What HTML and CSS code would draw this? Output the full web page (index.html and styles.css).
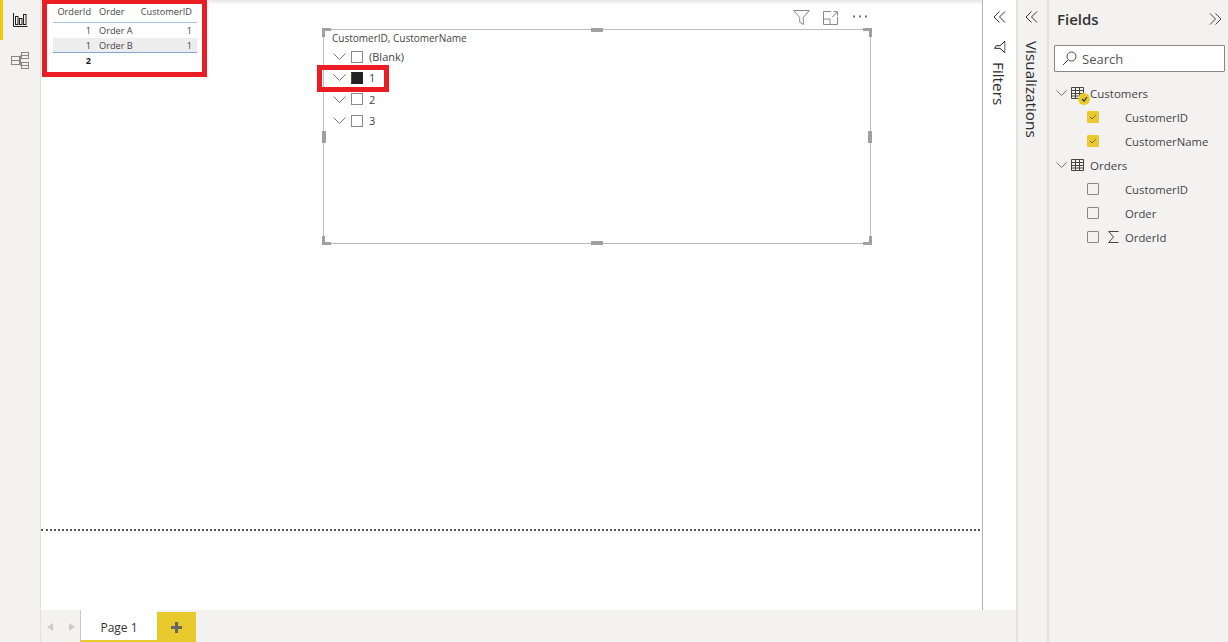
FILE: index.html
```html
<!DOCTYPE html>
<html lang="en">
<head>
<meta charset="utf-8">
<title>Report</title>
<link rel="stylesheet" href="styles.css">
</head>
<body>
<div class="app">
  <nav class="rail">
    <div class="rail-btn active">
      <svg width="16" height="14" viewBox="0 0 16 14" fill="none" stroke="#222" stroke-width="1"><path d="M1.5 0v13.5h14"/><rect x="3.5" y="3.5" width="2.5" height="8"/><rect x="7.5" y="5.5" width="2.5" height="6"/><rect x="11.500" y="1.500" width="2.500" height="10"/></svg>
    </div>
    <div class="rail-btn">
      <svg width="18" height="17" viewBox="0 0 18 17" fill="none" stroke="#888" stroke-width="1"><rect x=".5" y="4.500" width="8" height="8"/><path d="M.5 8.500h8"/><rect x="10.500" y=".5" width="7" height="6"/><path d="M10.500 3.500h7"/><rect x="10.500" y="10.500" width="7" height="6"/><path d="M10.500 13.500h7M9.500 3.500v10M8.500 8.500h1M9.500 3.500h1M9.500 13.500h1"/></svg>
    </div>
  </nav>
  <main class="main">
    <section class="canvas">
      <div class="topshade"></div>
      <div class="table-visual">
        <div class="tv-row tv-head"><span class="c1">OrderId</span><span class="c2">Order</span><span class="c3">CustomerID</span></div>
        <div class="tv-row tv-body"><span class="c1">1</span><span class="c2">Order A</span><span class="c3">1</span></div>
        <div class="tv-row tv-body tv-alt"><span class="c1">1</span><span class="c2">Order B</span><span class="c3">1</span></div>
        <div class="tv-row tv-total"><span class="c1">2</span></div>
      </div>
      <div class="visual-tools">
        <svg width="17" height="15" viewBox="0 0 17 15" fill="none" stroke="#888"><path d="M.7 .5h15.600l-6 7v7l-3.600-2.400V7.500z"/></svg>
        <svg width="15" height="14" viewBox="0 0 15 14" fill="none" stroke="#888"><path d="M8 .5H.5v13h14V6M.5 8h6.500v5.500M9 6.500l5-5.500M10.500 .7h4v4"/></svg>
        <svg class="dots" width="15" height="3" viewBox="0 0 15 3" fill="#777"><rect width="2" height="2" y=".5"/><rect x="6" width="2" height="2" y=".5"/><rect x="12" width="2" height="2" y=".5"/></svg>
      </div>
      <div class="slicer">
        <i class="h tl"></i><i class="h tr"></i><i class="h bl"></i><i class="h br"></i>
        <i class="m mt"></i><i class="m mb"></i><i class="m ml"></i><i class="m mr"></i>
        <div class="slicer-title">CustomerID, CustomerName</div>
        <div class="slicer-row"><svg class="chev" width="13" height="7" viewBox="0 0 13 7" fill="none" stroke="#777"><path d="M.5 .5l6 6 6-6"/></svg><span class="box"></span><span>(Blank)</span></div>
        <div class="slicer-row"><svg class="chev" width="13" height="7" viewBox="0 0 13 7" fill="none" stroke="#777"><path d="M.5 .5l6 6 6-6"/></svg><span class="box on"></span><span>1</span></div>
        <div class="slicer-row"><svg class="chev" width="13" height="7" viewBox="0 0 13 7" fill="none" stroke="#777"><path d="M.5 .5l6 6 6-6"/></svg><span class="box"></span><span>2</span></div>
        <div class="slicer-row"><svg class="chev" width="13" height="7" viewBox="0 0 13 7" fill="none" stroke="#777"><path d="M.5 .5l6 6 6-6"/></svg><span class="box"></span><span>3</span></div>
      </div>
      <div class="mark mark-table"></div>
      <div class="mark mark-row"></div>
      <div class="page-break"></div>
    </section>
    <footer class="tabs">
      <div class="tab-nav">
        <svg width="6" height="8" viewBox="0 0 6 8" fill="#ccc"><path d="M6 0v8L0 4z"/></svg>
        <svg width="6" height="8" viewBox="0 0 6 8" fill="#ccc"><path d="M0 0v8l6-4z"/></svg>
      </div>
      <div class="tab">Page 1</div>
      <div class="tab-add"><svg width="11" height="11" viewBox="0 0 11 11" fill="#666"><path d="M4 0h3v4h4v3H7v4H4V7H0V4h4z"/></svg></div>
    </footer>
  </main>
  <aside class="pane filters">
    <svg class="collapse" width="13" height="12" viewBox="0 0 13 12" fill="none" stroke="#333"><path d="M6.500 .5L1 6l5.500 5.500M12 .5L6.500 6l5.500 5.500"/></svg>
    <div class="vert filters-label">
      <svg class="vert-icon" width="13" height="12" viewBox="0 0 13 12" fill="none" stroke="#222"><path d="M.7 .5h11.600l-4.500 5v5.500l-2.600-1.800V5.500z"/></svg>
      <span>Filters</span>
    </div>
  </aside>
  <aside class="pane viz">
    <svg class="collapse" width="13" height="12" viewBox="0 0 13 12" fill="none" stroke="#333"><path d="M6.500 .5L1 6l5.500 5.500M12 .5L6.500 6l5.500 5.500"/></svg>
    <div class="vert"><span>Visualizations</span></div>
  </aside>
  <aside class="fields">
    <div class="fields-head">
      <span>Fields</span>
      <svg width="13" height="12" viewBox="0 0 13 12" fill="none" stroke="#444"><path d="M1 .5L6.500 6 1 11.500M6.500 .5L12 6l-5.500 5.500"/></svg>
    </div>
    <div class="search">
      <svg width="15" height="15" viewBox="0 0 15 15" fill="none" stroke="#444"><circle cx="9.500" cy="5.500" r="4.500"/><path d="M6 9L1 14"/></svg>
      <span>Search</span>
    </div>
    <div class="tree">
      <div class="tree-row table-row">
        <svg class="chev" width="11" height="6" viewBox="0 0 11 6" fill="none" stroke="#777"><path d="M.5 .5l5 5 5-5"/></svg>
        <span class="tbl-icon"><svg width="13" height="12" viewBox="0 0 13 12" fill="none" stroke="#444"><path d="M.5 .5h12v11H.5zM.5 3.500h12M.5 6.500h12M.5 9h12M4.500 .5v11M8.500 .5v11"/></svg><i class="badge"><svg width="7" height="6" viewBox="0 0 7 6" fill="none" stroke="#333" stroke-width="1.200"><path d="M1 3l2 2 3-4"/></svg></i></span>
        <span>Customers</span>
      </div>
      <div class="tree-row field-row"><span class="fbox on"><svg width="8" height="6" viewBox="0 0 8 6" fill="none" stroke="#7d6a10"><path d="M1 3l2 2 4-4"/></svg></span><span class="fsig"></span><span>CustomerID</span></div>
      <div class="tree-row field-row"><span class="fbox on"><svg width="8" height="6" viewBox="0 0 8 6" fill="none" stroke="#7d6a10"><path d="M1 3l2 2 4-4"/></svg></span><span class="fsig"></span><span>CustomerName</span></div>
      <div class="tree-row table-row">
        <svg class="chev" width="11" height="6" viewBox="0 0 11 6" fill="none" stroke="#777"><path d="M.5 .5l5 5 5-5"/></svg>
        <span class="tbl-icon"><svg width="13" height="12" viewBox="0 0 13 12" fill="none" stroke="#444"><path d="M.5 .5h12v11H.5zM.5 3.500h12M.5 6.500h12M.5 9h12M4.500 .5v11M8.500 .5v11"/></svg></span>
        <span>Orders</span>
      </div>
      <div class="tree-row field-row"><span class="fbox"></span><span class="fsig"></span><span>CustomerID</span></div>
      <div class="tree-row field-row"><span class="fbox"></span><span class="fsig"></span><span>Order</span></div>
      <div class="tree-row field-row"><span class="fbox"></span><span class="fsig"><svg width="11" height="12" viewBox="0 0 11 12" fill="none" stroke="#444"><path d="M10.500 .5H.7L5.500 6 .7 11.500h9.800"/></svg></span><span>OrderId</span></div>
    </div>
  </aside>
</div>
</body>
</html>
```
FILE: styles.css
```css
* { box-sizing: border-box; }
html, body { margin: 0; height: 100%; }
body { font-family: "Open Sans", "Noto Sans", sans-serif; color: #333; background: #fff; overflow: hidden; }
.app { display: flex; width: 1228px; height: 642px; }

.rail { width: 41px; flex: none; background: #f3f2f1; border-right: 1px solid #e3e2e1; }
.rail-btn { height: 40px; display: flex; align-items: center; justify-content: center; padding-right: 1px; }
.rail-btn.active { border-left: 3px solid #f2c811; padding-right: 3px; }

.main { width: 942px; flex: none; display: flex; flex-direction: column; border-right: 1px solid #b3b3b3; }
.canvas { flex: 1; position: relative; background: #fff; }
.topshade { position: absolute; left: 0; right: 0; top: 0; height: 5px; background: linear-gradient(#e6e6e6, #fff); }

.table-visual { position: absolute; left: 12px; top: 1px; width: 144px; font-size: 9.200px; color: #444; }
.tv-row { display: flex; align-items: center; height: 15px; }
.tv-row .c1 { width: 38px; text-align: right; }
.tv-row .c2 { width: 46px; padding-left: 8px; }
.tv-row .c3 { width: 55px; text-align: right; }
.tv-head { height: 22px; border-bottom: 1px solid #a9c5de; }
.tv-alt { background: #eeeded; border-bottom: 1px solid #7fa8d0; }
.tv-total { font-weight: 700; color: #222; }

.visual-tools { position: absolute; left: 752px; top: 10px; display: flex; align-items: center; gap: 13px; }
.visual-tools .dots { margin-left: 2px; margin-bottom: 3px; }

.slicer { position: absolute; left: 282px; top: 29px; width: 548px; height: 215px; border: 1px solid #bdbdbd; padding: 2px 8px; }
.slicer-title { font-size: 10px; line-height: 12px; color: #444; margin-bottom: 2px; }
.slicer-row { display: flex; align-items: center; height: 21.300px; font-size: 11px; color: #444; }
.slicer-row .chev { margin-left: 1px; margin-right: 5px; }
.box { width: 12px; height: 12px; border: 1px solid #8a8a8a; margin-right: 6px; background: #fff; }
.box.on { background: #222; border-color: #222; border-left-color: #5a4420; }
.h { position: absolute; width: 9px; height: 9px; border: 0 solid #a0a0a0; }
.tl { left: -2px; top: -2px; border-width: 3px 0 0 3px; }
.tr { right: -2px; top: -2px; border-width: 3px 3px 0 0; }
.bl { left: -2px; bottom: -2px; border-width: 0 0 3px 3px; }
.br { right: -2px; bottom: -2px; border-width: 0 3px 3px 0; }
.m { position: absolute; background: #a0a0a0; }
.mt, .mb { width: 12px; height: 4px; left: 267px; }
.mt { top: -2px; }
.mb { bottom: -2px; }
.ml, .mr { width: 4px; height: 12px; top: 101px; }
.ml { left: -2px; }
.mr { right: -2px; }

.mark { position: absolute; border: 5px solid #ec1c24; }
.mark-table { left: 1px; top: 0; width: 165px; height: 77px; border-top-width: 4px; }
.mark-row { left: 276px; top: 65px; width: 72px; height: 27px; }
.page-break { position: absolute; left: 0; right: 2px; top: 529px; border-top: 2px dotted #555; }

.tabs { height: 32px; flex: none; background: #f3f2f1; display: flex; align-items: flex-end; margin-right: -1px; position: relative; }
.tab-nav { width: 39px; height: 30px; display: flex; align-items: center; justify-content: center; gap: 16px; }
.tab { width: 77px; height: 32px; background: #fff; border-left: 1px solid #c8c8c8; border-bottom: 2px solid #e8ca2c; font-size: 12px; display: flex; align-items: center; justify-content: center; padding-top: 5px; }
.tab-add { width: 39px; height: 30px; background: #e8ca2c; display: flex; align-items: center; justify-content: center; }

.pane { flex: none; position: relative; padding-top: 11px; display: flex; flex-direction: column; }
.filters { width: 33px; background: #fff; padding-left: 10px; }
.viz { width: 33px; background: #f3f2f1; border-left: 2px solid #e3e2e1; border-right: 2px solid #e3e2e1; padding-left: 7px; }
.filters::after { content: ""; position: absolute; left: 0; right: 0; bottom: 0; height: 32px; background: #f3f2f1; }
.vert { writing-mode: vertical-rl; align-self: flex-start; font-size: 15.300px; font-weight: 500; line-height: 16px; color: #2b2b2b; display: flex; align-items: center; margin-top: 18px; }
.viz .vert { margin-left: -1.500px; }
.filters-label { gap: 9px; margin-left: -2px; }
.vert-icon { transform: rotate(90deg); }

.fields { flex: 1; background: #f3f2f1; padding: 0 3px 0 4px; }
.fields-head { height: 38px; margin-bottom: 7px; display: flex; align-items: center; justify-content: space-between; padding: 0 3px 0 4px; font-size: 15px; font-weight: 600; color: #333; }
.search { height: 27px; margin-left: 1px; background: #fff; border: 1px solid #8a8886; border-radius: 1px; display: flex; align-items: center; gap: 5px; padding-left: 7px; font-size: 13px; color: #555; }
.tree { margin-top: 9px; font-size: 11.500px; color: #444; }
.tree-row { height: 24px; display: flex; align-items: center; }
.tree .chev { margin-left: 3px; margin-right: 4px; }
.tbl-icon { position: relative; width: 13px; height: 12px; margin-right: 6px; display: block; line-height: 0; }
.badge { position: absolute; left: 7px; top: 6px; width: 12px; height: 12px; border-radius: 50%; background: #e8ca2c; display: flex; align-items: center; justify-content: center; }
.field-row { padding-left: 34px; font-size: 11.300px; }
.fbox { width: 12px; height: 12px; border: 1px solid #8a8886; border-radius: 1px; display: flex; align-items: center; justify-content: center; background: #f3f2f1; }
.fbox.on { background: #e8ca2c; border-color: #e8ca2c; }
.fsig { width: 26px; padding-left: 9px; line-height: 0; display: block; }
```
